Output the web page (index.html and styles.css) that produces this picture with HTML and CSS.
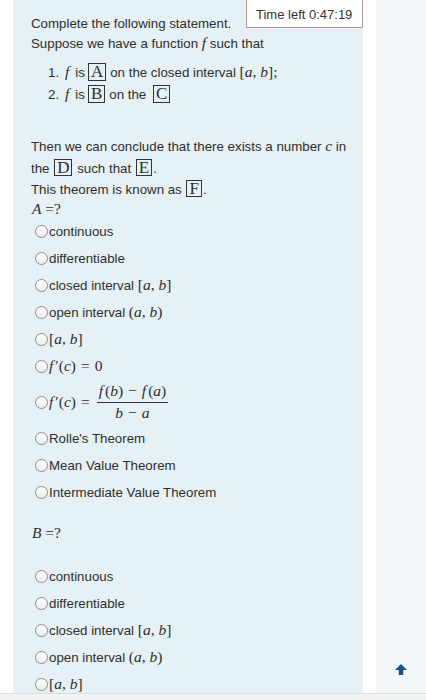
FILE: index.html
```html
<!DOCTYPE html>
<html>
<head>
<meta charset="utf-8">
<link rel="stylesheet" href="styles.css">
</head>
<body>
<div class="page">
  <div class="gutter"></div>
  <div class="panel">
    <div class="timer">Time left 0:47:19</div>
    <p class="intro">Complete the following statement.<br>Suppose we have a function <i class="m">f</i> such that</p>
    <div class="list">
      <div class="item"><span class="num">1.</span><i class="m">f</i><span class="is">is</span><span class="box">A</span>on the closed interval&nbsp;<span class="mr">[<i>a</i>, <i>b</i>];</span></div>
      <div class="item"><span class="num">2.</span><i class="m">f</i><span class="is">is</span><span class="box">B</span>on the&nbsp;<span class="box">C</span></div>
    </div>
    <p class="then">Then we can conclude that there exists a number <i class="m">c</i> in<br>the <span class="box">D</span> such that <span class="box">E</span>.<br>This theorem is known as <span class="box">F</span>.</p>
    <div class="q"><i>A</i> <span class="qop">=</span>?</div>
    <div class="opts">
      <div class="opt"><span class="radio"></span>continuous</div>
      <div class="opt"><span class="radio"></span>differentiable</div>
      <div class="opt"><span class="radio"></span>closed interval&nbsp;<span class="mr">[<i>a</i>, <i>b</i>]</span></div>
      <div class="opt"><span class="radio"></span>open interval&nbsp;<span class="mr">(<i>a</i>, <i>b</i>)</span></div>
      <div class="opt"><span class="radio"></span><span class="mr">[<i>a</i>, <i>b</i>]</span></div>
      <div class="opt"><span class="radio"></span><span class="mr"><i class="fi">f</i>′(<i>c</i>)<span class="op">=</span>0</span></div>
      <div class="opt tall"><span class="radio"></span><span class="mr"><i class="fi">f</i>′(<i>c</i>)<span class="op">=</span></span><span class="frac"><span class="numer"><i class="fi">f</i>(<i>b</i>)<span class="op">−</span><i class="fi">f</i>(<i>a</i>)</span><span class="denom"><i>b</i><span class="op">−</span><i>a</i></span></span></div>
      <div class="opt"><span class="radio"></span>Rolle's Theorem</div>
      <div class="opt"><span class="radio"></span>Mean Value Theorem</div>
      <div class="opt"><span class="radio"></span>Intermediate Value Theorem</div>
    </div>
    <div class="q qb"><i>B</i> <span class="qop">=</span>?</div>
    <div class="opts optsb">
      <div class="opt"><span class="radio"></span>continuous</div>
      <div class="opt"><span class="radio"></span>differentiable</div>
      <div class="opt"><span class="radio"></span>closed interval&nbsp;<span class="mr">[<i>a</i>, <i>b</i>]</span></div>
      <div class="opt"><span class="radio"></span>open interval&nbsp;<span class="mr">(<i>a</i>, <i>b</i>)</span></div>
      <div class="opt"><span class="radio"></span><span class="mr">[<i>a</i>, <i>b</i>]</span></div>
    </div>
  </div>
  <div class="gap"></div>
  <div class="side">
    <svg class="up" width="12" height="11" viewBox="0 0 12 11"><path d="M6 0 L12 6 L8.2 6 L8.2 11 L3.8 11 L3.8 6 L0 6 Z" fill="#1d4f7e"/></svg>
  </div>
</div>
<div class="footer"></div>
</body>
</html>
```

FILE: styles.css
```css
html, body {
  margin: 0;
  padding: 0;
  background: #ffffff;
  width: 426px;
  height: 700px;
  overflow: hidden;
}
body {
  font-family: "Liberation Sans", Arial, sans-serif;
  font-size: 13.3px;
  color: #2e2e2e;
}
.page {
  display: flex;
  height: 693px;
}
.gutter {
  width: 13px;
  flex: none;
}
.panel {
  position: relative;
  width: 332px;
  flex: none;
  background: #e6f1f5;
  padding: 14px 0 0 18px;
  box-sizing: content-box;
}
.gap {
  width: 13px;
  flex: none;
}
.side {
  flex: 1;
  background: #f4f7f9;
  display: flex;
  align-items: flex-end;
  justify-content: center;
}
.up {
  margin: 0 0 18px 0;
}
.footer {
  height: 7px;
  border-top: 1px solid #dedede;
  background: #f3f3f3;
}
.timer {
  position: absolute;
  top: -1px;
  right: 0;
  width: 106px;
  height: 27px;
  line-height: 29px;
  padding-left: 9px;
  background: #ffffff;
  border: 1px solid #b79696;
  font-size: 13px;
  color: #333;
}
p {
  margin: 0;
}
.intro {
  line-height: 19px;
}
.m, .mr i, .q i, .frac i {
  font-family: "Liberation Serif", "Times New Roman", serif;
  font-style: italic;
  font-size: 15.5px;
}
.fi {
  padding-right: 2px;
}
.mr {
  font-family: "Liberation Serif", "Times New Roman", serif;
  font-size: 15.5px;
}
.op {
  display: inline-block;
  padding: 0 5px;
}
.list {
  margin-top: 8px;
  padding-left: 17px;
}
.item {
  height: 22px;
  display: flex;
  align-items: center;
  white-space: nowrap;
}
.num {
  width: 17px;
}
.is {
  margin-left: 6px;
}
.box {
  display: inline-block;
  font-family: "Liberation Serif", "Times New Roman", serif;
  font-size: 17px;
  line-height: 15px;
  padding: 0 2px;
  border: 1.5px solid #333;
  margin: 0 1px;
}
.item .box {
  margin: 0 4px 0 3px;
  line-height: 16px;
}
.then {
  margin-top: 30px;
  line-height: 21.5px;
}
.q {
  height: 16px;
  line-height: 16px;
  font-family: "Liberation Serif", "Times New Roman", serif;
  font-size: 15.5px;
  padding-left: 1px;
}
.opts {
  margin-top: 1px;
  padding-left: 4px;
}
.opt {
  height: 27px;
  display: flex;
  align-items: center;
  white-space: nowrap;
}
.opt.tall {
  height: 45px;
}
.radio {
  width: 11px;
  height: 11px;
  border: 1px solid #8c8c8c;
  border-radius: 50%;
  background: linear-gradient(#ffffff, #ececec);
  flex: none;
  margin-right: 1px;
}
.frac {
  display: inline-flex;
  flex-direction: column;
  align-items: center;
  font-family: "Liberation Serif", "Times New Roman", serif;
  font-size: 15.5px;
  margin-left: 2px;
}
.numer {
  padding: 0 2px 2px;
  border-bottom: 1px solid #333;
  line-height: 18px;
}
.denom {
  line-height: 20px;
}
.qb {
  margin-top: 19px;
}
.optsb {
  margin-top: 22px;
}
```
